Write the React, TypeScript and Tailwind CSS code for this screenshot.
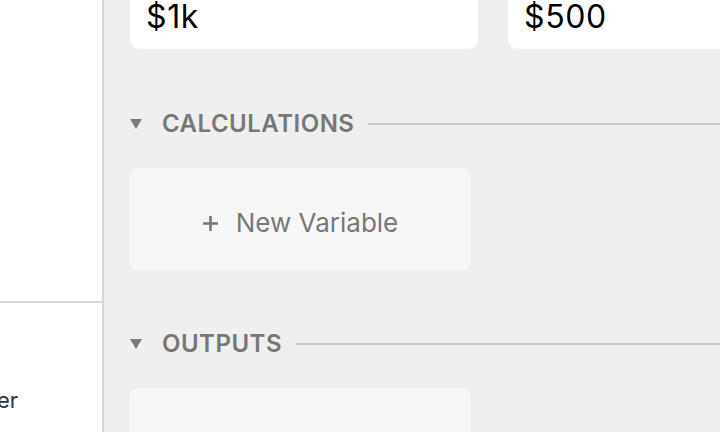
import React from "react";

function Header({ title }: { title: string }) {
  return (
    <div className="flex items-center h-[24px]">
      <svg width="12" height="10" viewBox="0 0 12 10" className="shrink-0">
        <polygon points="0,0 12,0 6,10" fill="#7a7a7a" />
      </svg>
      <span className="ml-[20px] text-[24px] font-semibold tracking-[0.5px] text-[#777] leading-none">{title}</span>
      <div className="flex-1 ml-[14px] h-[2px] bg-[#c8c8c8]" />
    </div>
  );
}

export default function App() {
  return (
    <div
      className="flex w-[720px] h-[432px] overflow-hidden bg-[#efefef]"
      style={{ fontFamily: 'Inter, "Liberation Sans", Arial, sans-serif' }}
    >
      <div className="w-[104px] shrink-0 bg-white border-r-2 border-[#d6d6d6] flex flex-col overflow-hidden">
        <div className="h-[301px] shrink-0" />
        <div className="h-[2px] bg-[#d6d6d6]" />
        <div className="mt-[86px] -ml-[34px] text-[22px] leading-none text-[#333] whitespace-nowrap">Filter</div>
      </div>
      <div className="flex-1 overflow-hidden pl-[26px]">
        <div className="w-[800px] -mt-[31px]">
          <div className="flex gap-[30px]">
            <div className="w-[348px] shrink-0 h-[80px] bg-white rounded-[10px] pl-[16px] pt-[32px] text-[32px] tracking-[0.6px] leading-none text-black">$1k</div>
            <div className="w-[348px] shrink-0 h-[80px] bg-white rounded-[10px] pl-[16px] pt-[32px] text-[32px] tracking-[0.6px] leading-none text-black">$500</div>
          </div>
        </div>
        <div className="mt-[63px]">
          <Header title="CALCULATIONS" />
        </div>
        <div className="mt-[32px] w-[340px] h-[102px] bg-[#f7f7f7] rounded-[8px] flex items-center justify-center gap-[17px] pt-[8px] text-[#777]">
          <svg width="17" height="17" viewBox="0 0 17 17" className="shrink-0">
            <path d="M8.5 1v15M1 8.5h15" stroke="#777" strokeWidth="2.6" />
          </svg>
          <span className="text-[26px] leading-none">New Variable</span>
        </div>
        <div className="mt-[62px]">
          <Header title="OUTPUTS" />
        </div>
        <div className="mt-[32px] w-[340px] h-[102px] bg-[#f7f7f7] rounded-[8px]" />
      </div>
    </div>
  );
}
